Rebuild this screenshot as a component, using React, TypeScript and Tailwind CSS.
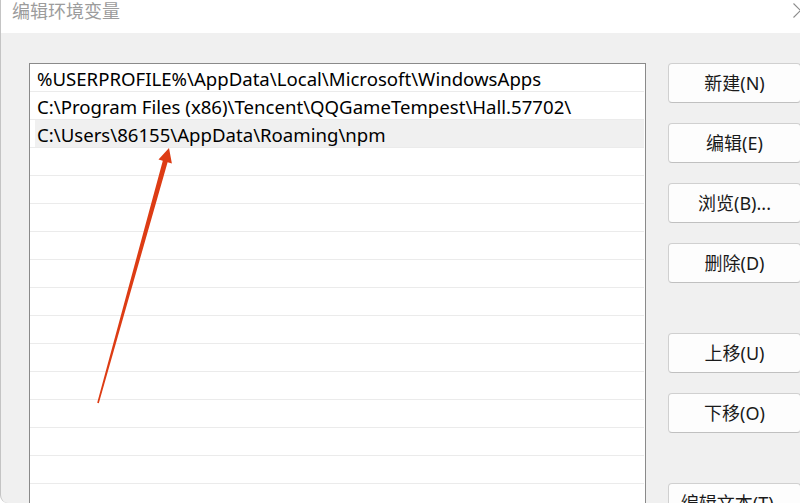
import React from "react";

const paths = [
  "%USERPROFILE%\\AppData\\Local\\Microsoft\\WindowsApps",
  "C:\\Program Files (x86)\\Tencent\\QQGameTempest\\Hall.57702\\",
  "C:\\Users\\86155\\AppData\\Roaming\\npm",
];

const font = { fontFamily: '"Noto Sans", "Noto Sans CJK SC", sans-serif' };

function WinButton({ label }: { label: string }) {
  return (
    <button className="h-[40px] w-[133px] shrink-0 rounded-[4px] border border-[#d0d0d0] border-b-[#c0c0c0] bg-[#fdfdfd] text-[18px] leading-none text-[#1a1a1a]">
      {label}
    </button>
  );
}

export default function App() {
  const rows = Array.from({ length: 16 }, (_, i) => paths[i] ?? "");

  return (
    <div className="relative h-[503px] w-[800px] overflow-hidden bg-white" style={font}>
      <div className="flex h-full flex-col rounded-bl-[8px] border-l border-[#c4c4c4] bg-[#f0f0f0]">
        {/* title bar */}
        <div className="flex h-[33px] shrink-0 items-start bg-white">
          <span className="ml-[11px] mt-[-1px] text-[18px] leading-[24px] text-[#9c9c9c]">编辑环境变量</span>
          <svg className="ml-auto mr-[-8px] mt-[3px]" width="15" height="15" viewBox="0 0 15 15">
            <path d="M0.5 0.5 L14.5 14.5 M14.5 0.5 L0.5 14.5" stroke="#8c8c8c" strokeWidth="1.1" fill="none" />
          </svg>
        </div>

        <div className="flex flex-1 items-start pt-[30px]">
          {/* path list */}
          <div className="ml-[28px] h-[460px] w-[617px] shrink-0 overflow-hidden border border-[#8a8a8a] bg-white pr-[1px]">
            {rows.map((p, i) => (
              <div key={i} className="h-[28px] border-b border-[#ebebeb]">
                <div
                  className={
                    "ml-[5px] flex h-full items-center pl-[2px] pt-[3px] text-[18.6px] leading-none text-black " +
                    (i === 2 ? "bg-[#f0f0f0]" : "")
                  }
                >
                  {p}
                </div>
              </div>
            ))}
          </div>

          {/* buttons */}
          <div className="ml-[22px] flex flex-col gap-[20px]">
            <WinButton label="新建(N)" />
            <WinButton label="编辑(E)" />
            <WinButton label="浏览(B)..." />
            <WinButton label="删除(D)" />
            <div className="mt-[30px] flex flex-col gap-[20px]">
              <WinButton label="上移(U)" />
              <WinButton label="下移(O)" />
            </div>
            <div className="mt-[30px]">
              <WinButton label="编辑文本(T)..." />
            </div>
          </div>
        </div>
      </div>

      {/* annotation arrow */}
      <svg className="pointer-events-none absolute left-0 top-0" width="800" height="503" viewBox="0 0 800 503">
        <polygon
          points="169,148 171.9,163.4 167.6,162.2 98.8,403.2 97.2,402.8 162.8,160.8 158.5,159.6"
          fill="#dd3c14"
        />
      </svg>
    </div>
  );
}
